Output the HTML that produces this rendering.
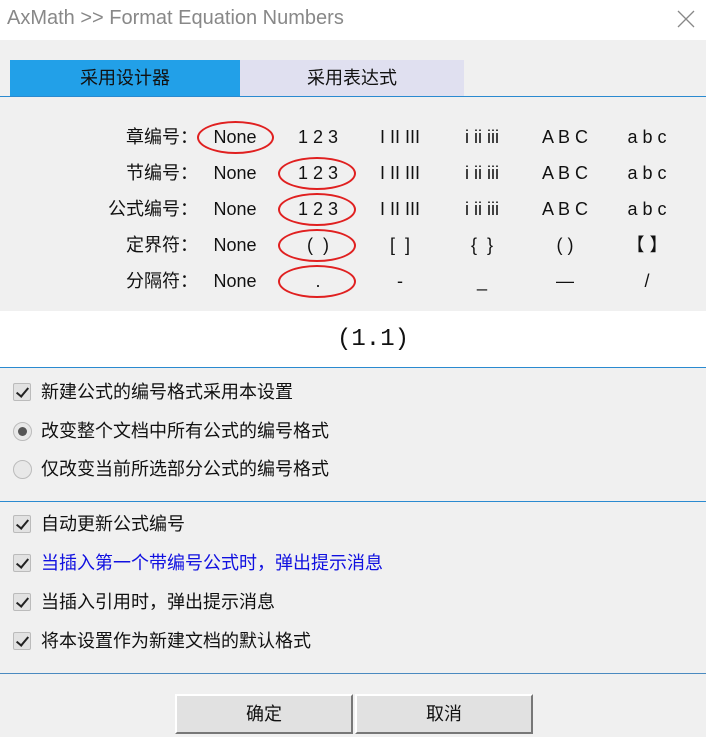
<!DOCTYPE html><html><head><meta charset="utf-8"><style>
*{margin:0;padding:0;box-sizing:border-box}
body{width:706px;height:737px;background:#f0f0f0;position:relative;overflow:hidden;font-family:"Liberation Sans","Noto Sans CJK SC",sans-serif;font-size:18px;color:#111}
.a{position:absolute;white-space:nowrap;line-height:22px}
.title{left:0;top:0;width:706px;height:40px;background:#fff}
.t{top:0;height:36px;line-height:36px;text-align:center}
.c{transform:translateX(-50%)}
.ell{position:absolute;border:2.5px solid #e02020;border-radius:50%}
.cb{position:absolute;left:13px;width:18px;height:18px;border:1px solid #bbb;background:#e2e2e2;border-radius:2px}
.cb:after{content:"";position:absolute;left:5px;top:1px;width:5px;height:10px;border:solid #222;border-width:0 2.5px 2.5px 0;transform:rotate(40deg)}
.rb{position:absolute;left:13px;width:19px;height:19px;border:1px solid #bbb;border-radius:50%;background:#e8e8e8}
.hl{position:absolute;left:0;width:706px;height:1px;background:#2a8ad0}
.btn{position:absolute;top:694px;height:40px;background:#e1e1e1;border-top:2px solid #fff;border-left:2px solid #fff;border-right:2px solid #777;border-bottom:2px solid #777;text-align:center;line-height:36px}
</style></head><body>
<div class="a title"></div>
<div class="a" style="left:7px;top:7px;font-size:20px;color:#888">AxMath &gt;&gt; Format Equation Numbers</div>
<svg class="a" style="left:677px;top:10px" width="18" height="18"><path d="M1 1L17 17M17 1L1 17" stroke="#888" stroke-width="1.3"/></svg>
<div class="a" style="left:10px;top:60px;width:230px;height:36px;background:#22a0e8"></div>
<div class="a" style="left:240px;top:60px;width:224px;height:36px;background:#e0e0f0"></div>
<div class="a t" style="left:10px;top:60px;width:230px;line-height:36px">采用设计器</div>
<div class="a t" style="left:240px;top:60px;width:224px;line-height:36px">采用表达式</div>
<div class="hl" style="top:96px"></div>
<div class="ell" style="left:197px;top:121px;width:77px;height:33px"></div>
<div class="ell" style="left:278px;top:157px;width:78px;height:33px"></div>
<div class="ell" style="left:278px;top:193px;width:78px;height:33px"></div>
<div class="ell" style="left:278px;top:229px;width:78px;height:33px"></div>
<div class="ell" style="left:278px;top:265px;width:78px;height:33px"></div>
<div id="g"></div>
<script>
var L=["章编号：","节编号：","公式编号：","定界符：","分隔符："];
var R=[["None","1 2 3","I II III","i ii iii","A B C","a b c"],["None","1 2 3","I II III","i ii iii","A B C","a b c"],["None","1 2 3","I II III","i ii iii","A B C","a b c"],["None","(&nbsp;&nbsp;)","[&nbsp;&nbsp;]","{&nbsp;&nbsp;}","(&nbsp;)","【&nbsp;】"],["None",".","-","_","—","/"]];
var X=[235,318,400,482,565,647],h="";
for(var i=0;i<5;i++){var y=126+i*36;h+='<div class="a" style="right:508px;top:'+y+'px">'+L[i]+'</div>';
for(var j=0;j<6;j++)h+='<div class="a c" style="left:'+X[j]+'px;top:'+y+'px">'+R[i][j]+'</div>';}
document.getElementById("g").innerHTML=h;
</script>
<div class="a" style="left:0;top:311px;width:706px;height:56px;background:#fff"></div>
<div class="a c" style="left:373px;top:327px;font-family:'Liberation Mono',monospace;font-size:24px;line-height:26px">(1.1)</div>
<div class="hl" style="top:367px"></div>
<div class="cb" style="top:383px"></div><div class="a" style="left:41px;top:381px">新建公式的编号格式采用本设置</div>
<div class="rb" style="top:422px"></div><div class="a" style="left:18px;top:427px;width:9px;height:9px;border-radius:50%;background:#555"></div><div class="a" style="left:41px;top:420px">改变整个文档中所有公式的编号格式</div>
<div class="rb" style="top:460px"></div><div class="a" style="left:41px;top:458px">仅改变当前所选部分公式的编号格式</div>
<div class="hl" style="top:501px"></div>
<div class="cb" style="top:515px"></div><div class="a" style="left:41px;top:513px">自动更新公式编号</div>
<div class="cb" style="top:554px"></div><div class="a" style="left:41px;top:552px;color:#1010e0">当插入第一个带编号公式时，弹出提示消息</div>
<div class="cb" style="top:593px"></div><div class="a" style="left:41px;top:591px">当插入引用时，弹出提示消息</div>
<div class="cb" style="top:632px"></div><div class="a" style="left:41px;top:630px">将本设置作为新建文档的默认格式</div>
<div class="hl" style="top:673px;background:#4a8ac0"></div>
<div class="btn" style="left:175px;width:178px">确定</div>
<div class="btn" style="left:355px;width:178px">取消</div>
</body></html>
